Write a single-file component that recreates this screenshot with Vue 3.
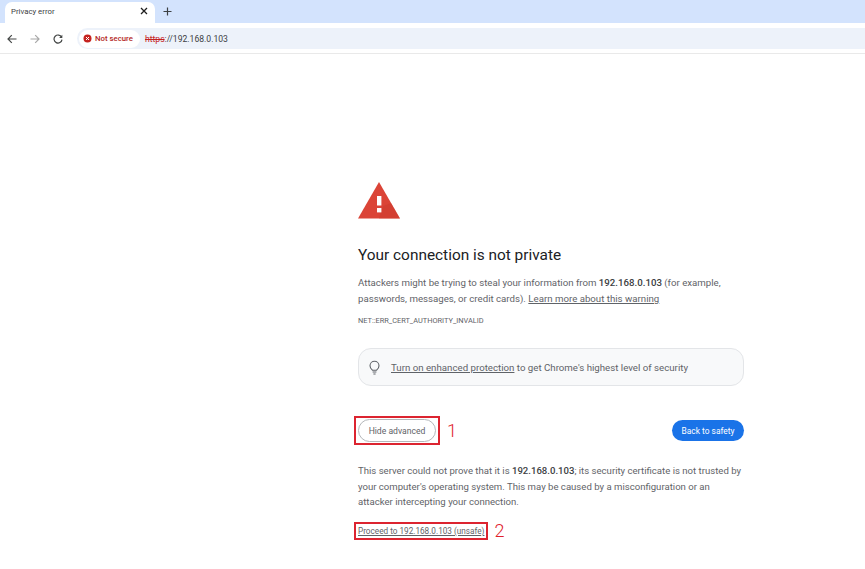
<template>
  <div class="browser">
    <div class="tabstrip">
      <div class="tab">
        <span class="tab-title">Privacy error</span>
        <svg class="tab-close" width="8" height="8" viewBox="0 0 8 8">
          <path d="M1 1l6 6M7 1L1 7" stroke="#1f1f1f" stroke-width="1.3" fill="none" />
        </svg>
      </div>
      <svg class="new-tab" width="9" height="9" viewBox="0 0 9 9">
        <path d="M4.5 0.5v8M0.5 4.5h8" stroke="#3c4043" stroke-width="1.2" fill="none" />
      </svg>
    </div>
    <div class="toolbar">
      <svg class="nav-icon" width="10" height="10" viewBox="0 0 10 10">
        <path d="M9.5 5H1.2M4.8 1.2L1 5l3.8 3.8" stroke="#444746" stroke-width="1.2" fill="none" />
      </svg>
      <svg class="nav-icon" width="10" height="10" viewBox="0 0 10 10">
        <path d="M0.5 5h8.3M5.2 1.2L9 5 5.2 8.8" stroke="#a8a8a8" stroke-width="1.2" fill="none" />
      </svg>
      <svg class="nav-icon" width="10" height="10" viewBox="0 0 10 10">
        <path d="M8.6 3.2A4 4 0 1 0 9 5.6" stroke="#444746" stroke-width="1.2" fill="none" />
        <path d="M9.3 0.8v3.2H6.1z" fill="#444746" />
      </svg>
      <div class="omnibox">
        <div class="chip">
          <svg width="9" height="9" viewBox="0 0 9 9">
            <circle cx="4.5" cy="4.5" r="4" fill="#c5221f" />
            <path d="M3 3l3 3M6 3L3 6" stroke="#fff" stroke-width="1" fill="none" />
          </svg>
          <span>Not secure</span>
        </div>
        <span class="url"><s>https</s>://192.168.0.103</span>
      </div>
    </div>

    <main class="page">
      <svg class="warn" width="42" height="37" viewBox="0 0 42 37">
        <path d="M21 0L42 36.5H0z" fill="#db4437" />
        <path d="M21 36.5H42L33 21 25 24z" fill="#c9392d" opacity=".45" />
        <rect x="19" y="14" width="4.4" height="9.5" fill="#fff" />
        <rect x="19" y="26" width="4.4" height="4.4" fill="#fff" />
      </svg>
      <h1>Your connection is not private</h1>
      <p class="body">
        Attackers might be trying to steal your information from <b>192.168.0.103</b> (for example,
        passwords, messages, or credit cards). <a>Learn more about this warning</a>
      </p>
      <p class="code">NET::ERR_CERT_AUTHORITY_INVALID</p>
      <div class="promo">
        <svg width="11" height="15" viewBox="0 0 11 15">
          <path d="M3.5 10.2C2 9.2 1 7.6 1 5.8a4.5 4.5 0 0 1 9 0c0 1.8-1 3.4-2.5 4.4z" stroke="#5f6368" stroke-width="1.1" fill="none" />
          <path d="M3.6 12h3.8M4.4 14h2.2" stroke="#5f6368" stroke-width="1.1" fill="none" />
        </svg>
        <span><a>Turn on enhanced protection</a> to get Chrome's highest level of security</span>
      </div>
      <div class="actions">
        <div class="marked">
          <div class="mark-box btn-box">
            <button class="btn-outline">Hide advanced</button>
          </div>
          <span class="mark-no">1</span>
        </div>
        <button class="btn-primary">Back to safety</button>
      </div>
      <p class="body detail">
        This server could not prove that it is <b>192.168.0.103</b>; its security certificate is not trusted by
        your computer's operating system. This may be caused by a misconfiguration or an
        attacker intercepting your connection.
      </p>
      <div class="marked proceed">
        <div class="mark-box link-box"><a>Proceed to 192.168.0.103 (unsafe)</a></div>
        <span class="mark-no">2</span>
      </div>
    </main>
  </div>
</template>

<script setup>
</script>

<style>
  html,
  body {
    margin: 0;
    background: #fff;
  }
</style>

<style scoped>
  .browser {
    width: 865px;
    height: 569px;
    overflow: hidden;
    font-family: Roboto, "Open Sans", sans-serif;
    color: #5f6368;
  }
  .tabstrip {
    height: 23px;
    background: #d3e3fd;
    display: flex;
    align-items: center;
    padding-left: 5px;
  }
  .tab {
    width: 150px;
    height: 21px;
    margin-top: 2px;
    padding: 0 7px 3px 6px;
    background: #fff;
    border-radius: 7px 7px 0 0;
    display: flex;
    align-items: center;
    justify-content: space-between;
    box-sizing: border-box;
    font-size: 7.8px;
    color: #3c4043;
  }
  .new-tab {
    margin-left: 8px;
  }
  .toolbar {
    height: 29px;
    padding: 1px 0 0 7px;
    box-sizing: content-box;
    display: flex;
    align-items: center;
    border-bottom: 1px solid #e9e9e9;
    background: #fff;
  }
  .nav-icon {
    margin-right: 13px;
  }
  .omnibox {
    margin-left: 1px;
    flex: 1;
    height: 21px;
    background: #edf2fa;
    border-radius: 11px 0 0 11px;
    display: flex;
    align-items: center;
    padding-left: 2px;
    font-size: 8.6px;
    color: #3c4043;
  }
  .chip {
    height: 18px;
    padding: 0 7px 0 4px;
    background: #fff;
    border-radius: 9px;
    display: flex;
    align-items: center;
    gap: 3px;
    color: #b3261e;
    font-size: 7.8px;
    font-weight: 500;
  }
  .url {
    margin-left: 5px;
  }
  .url s {
    color: #c5221f;
  }
  .page {
    padding: 128px 0 0 358px;
    width: 386px;
  }
  .warn {
    display: block;
  }
  h1 {
    margin: 25px 0 0;
    font-size: 15.4px;
    line-height: 22px;
    font-weight: 400;
    color: #202124;
  }
  .body {
    margin: 9px 0 0;
    font-size: 9.68px;
    line-height: 15.6px;
    color: #5f6368;
  }
  .body b {
    color: #3c4043;
    font-weight: 500;
  }
  a {
    text-decoration: underline;
    color: #5f6368;
  }
  .code {
    margin: 9px 0 0;
    font-size: 7.4px;
    line-height: 12px;
    color: #5f6368;
  }
  .promo {
    margin-top: 21px;
    height: 38px;
    box-sizing: border-box;
    border: 1px solid #e3e5e8;
    border-radius: 13px;
    background: #f8f9fa;
    display: flex;
    align-items: center;
    gap: 11px;
    padding-left: 10px;
    font-size: 9.7px;
  }
  .actions {
    margin-top: 30px;
    display: flex;
    align-items: center;
    justify-content: space-between;
  }
  .marked {
    display: flex;
    align-items: center;
    gap: 7px;
  }
  .mark-box {
    border: 2px solid #dc2430;
    box-sizing: border-box;
  }
  .btn-box {
    margin-left: -4px;
    padding: 2px;
    height: 29px;
    display: flex;
    align-items: center;
  }
  .btn-outline {
    width: 78px;
    height: 23px;
    border: 1px solid #b5b8bb;
    border-radius: 12px;
    background: #fff;
    font: inherit;
    font-size: 8.6px;
    color: #5f6368;
    padding: 0;
  }
  .btn-primary {
    width: 72px;
    height: 21px;
    border: 0;
    border-radius: 11px;
    background: #1a73e8;
    color: #fff;
    font: inherit;
    font-size: 8.4px;
    padding: 0;
  }
  .mark-no {
    color: #e0202a;
    font-size: 18px;
    line-height: 20px;
    font-weight: 300;
  }
  .detail {
    margin-top: 18px;
    font-size: 9.58px;
  }
  .proceed {
    margin-top: 11px;
    gap: 6px;
  }
  .link-box {
    margin-left: -4px;
    height: 18px;
    padding: 0 2px;
    display: flex;
    align-items: center;
    font-size: 8.2px;
  }
</style>
